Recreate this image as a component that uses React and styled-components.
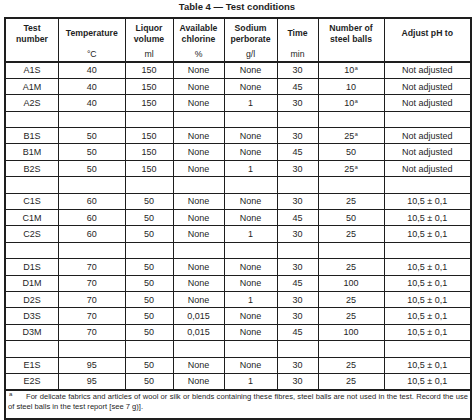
import React from "react";
import styled, { createGlobalStyle } from "styled-components";

const GlobalStyle = createGlobalStyle`
  html, body {
    margin: 0;
    padding: 0;
    background: #ffffff;
  }
  body {
    font-family: "Liberation Sans", Arial, sans-serif;
    color: #1e1e1e;
  }
`;

const Page = styled.div`
  width: 474px;
  padding: 0 4px 0 4px;
  box-sizing: border-box;
`;

const Title = styled.div`
  height: 17px;
  line-height: 13px;
  text-align: center;
  font-weight: bold;
  font-size: 9.5px;
`;

const Table = styled.table`
  width: 466px;
  table-layout: fixed;
  border-collapse: collapse;
  border: 2px solid #1e1e1e;
  font-size: 9px;
`;

const HeadCell = styled.th`
  height: 42px;
  padding: 0;
  border: 1px solid #1e1e1e;
  border-bottom: 2px solid #1e1e1e;
  vertical-align: top;
  font-weight: normal;
`;

const HeadInner = styled.div`
  display: flex;
  flex-direction: column;
  align-items: center;
`;

const Label = styled.div`
  height: 29px;
  display: flex;
  align-items: center;
  justify-content: center;
  text-align: center;
  font-weight: bold;
  font-size: 8.7px;
  line-height: 10.5px;
`;

const Unit = styled.div`
  height: 12px;
  line-height: 12px;
  font-size: 8.7px;
`;

const Row = styled.tr`
  height: 16.4px;
`;

const Cell = styled.td`
  padding: 0;
  border: 1px solid #1e1e1e;
  border-bottom: ${(p) => (p.$last ? "2px" : "1px")} solid #1e1e1e;
  text-align: center;
  line-height: 14px;
  white-space: nowrap;
`;

const Sup = styled.sup`
  font-size: 5.5px;
  vertical-align: 3px;
  line-height: 0;
  margin-left: 0.5px;
`;

const NoteCell = styled.td`
  height: 24px;
  padding: 1px 2px 2px 2px;
  font-size: 7.6px;
  line-height: 10px;
  vertical-align: top;
  overflow: hidden;
`;

const NoteLine = styled.div`
  white-space: nowrap;
  text-align: ${(p) => (p.$justify ? "justify" : "left")};
  text-align-last: ${(p) => (p.$justify ? "justify" : "auto")};
`;

const NoteMark = styled.span`
  display: inline-block;
  width: 17px;
  font-size: 6px;
  vertical-align: 3px;
  line-height: 0;
  padding-left: 1px;
`;

const widths = [53.5, 66.5, 48, 51, 53, 41, 66, 87];

const headers = [
  { label: ["Test", "number"], unit: "" },
  { label: ["Temperature"], unit: "°C" },
  { label: ["Liquor", "volume"], unit: "ml" },
  { label: ["Available", "chlorine"], unit: "%" },
  { label: ["Sodium", "perborate"], unit: "g/l" },
  { label: ["Time"], unit: "min" },
  { label: ["Number of", "steel balls"], unit: "" },
  { label: ["Adjust pH to"], unit: "" },
];

const NA = "Not adjusted";
const PH = "10,5 ± 0,1";

const rows = [
  ["A1S", "40", "150", "None", "None", "30", "10a", NA],
  ["A1M", "40", "150", "None", "None", "45", "10", NA],
  ["A2S", "40", "150", "None", "1", "30", "10a", NA],
  null,
  ["B1S", "50", "150", "None", "None", "30", "25a", NA],
  ["B1M", "50", "150", "None", "None", "45", "50", NA],
  ["B2S", "50", "150", "None", "1", "30", "25a", NA],
  null,
  ["C1S", "60", "50", "None", "None", "30", "25", PH],
  ["C1M", "60", "50", "None", "None", "45", "50", PH],
  ["C2S", "60", "50", "None", "1", "30", "25", PH],
  null,
  ["D1S", "70", "50", "None", "None", "30", "25", PH],
  ["D1M", "70", "50", "None", "None", "45", "100", PH],
  ["D2S", "70", "50", "None", "1", "30", "25", PH],
  ["D3S", "70", "50", "0,015", "None", "30", "25", PH],
  ["D3M", "70", "50", "0,015", "None", "45", "100", PH],
  null,
  ["E1S", "95", "50", "None", "None", "30", "25", PH],
  ["E2S", "95", "50", "None", "1", "30", "25", PH],
];

function renderValue(v) {
  if (/^\d+a$/.test(v)) {
    return (
      <>
        {v.slice(0, -1)}
        <Sup>a</Sup>
      </>
    );
  }
  return v;
}

export default function App() {
  return (
    <Page>
      <GlobalStyle />
      <Title>Table 4 — Test conditions</Title>
      <Table>
        <colgroup>
          {widths.map((w, i) => (
            <col key={i} style={{ width: w }} />
          ))}
        </colgroup>
        <thead>
          <tr>
            {headers.map((h, i) => (
              <HeadCell key={i}>
                <HeadInner>
                  <Label>
                    <div>
                      {h.label.map((l, j) => (
                        <div key={j}>{l}</div>
                      ))}
                    </div>
                  </Label>
                  <Unit>{h.unit}</Unit>
                </HeadInner>
              </HeadCell>
            ))}
          </tr>
        </thead>
        <tbody>
          {rows.map((r, i) => {
            const last = i === rows.length - 1;
            return (
              <Row key={i}>
                {(r || Array(8).fill("")).map((v, j) => (
                  <Cell key={j} $last={last}>
                    {renderValue(v)}
                  </Cell>
                ))}
              </Row>
            );
          })}
          <tr>
            <NoteCell colSpan={8}>
              <NoteLine $justify>
                <NoteMark>a</NoteMark>
                For delicate fabrics and articles of wool or silk or blends
                containing these fibres, steel balls are not used in the test.
                Record the use
              </NoteLine>
              <NoteLine>of steel balls in the test report [see 7 g)].</NoteLine>
            </NoteCell>
          </tr>
        </tbody>
      </Table>
    </Page>
  );
}
